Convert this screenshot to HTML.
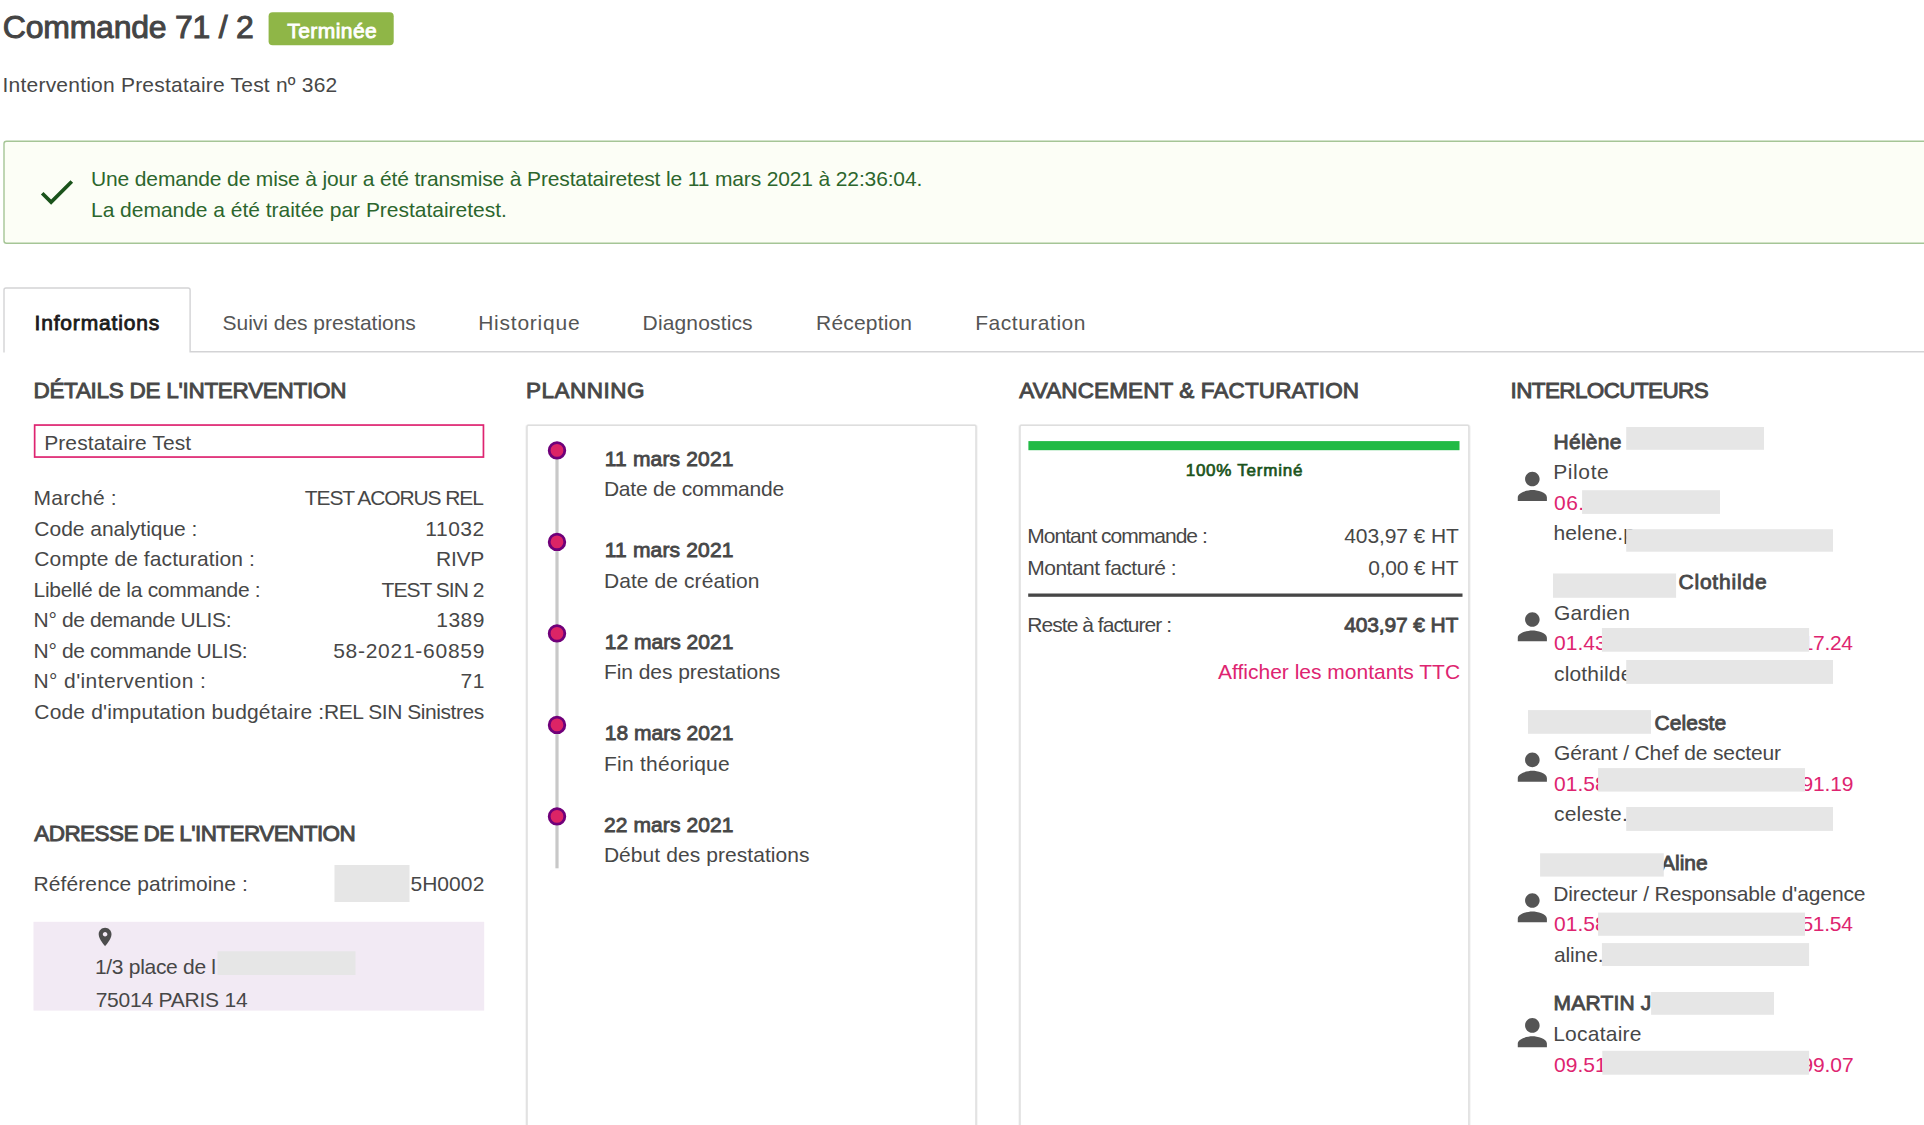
<!doctype html>
<html lang="fr"><head><meta charset="utf-8"><title>Commande 71 / 2</title>
<style>
*{margin:0;padding:0;box-sizing:border-box}
html,body{width:1924px;height:1125px;background:#fff;overflow:hidden}
body{position:relative;font-family:"Liberation Sans", sans-serif;font-size:21px;color:#474747;-webkit-font-smoothing:antialiased}
.t{position:absolute;white-space:pre;line-height:1;font-variant-ligatures:none}
.b{position:absolute}
</style></head>
<body>
<svg class="b" style="left:0;top:0" width="1924" height="1125" viewBox="0 0 1924 1125">
<rect x="268.60" y="12.30" width="125.10" height="33.00" fill="#8fb647" rx="4"/>
<rect x="4.00" y="141.20" width="1935.30" height="102.10" rx="2.5" fill="#fcfef6" stroke="#a5c596" stroke-width="1.4"/>
<path transform="translate(34.66 169.97) scale(1.83)" fill="#1a531b" d="M9 16.17L4.83 12l-1.42 1.41L9 19 21 7l-1.41-1.41z"/>
<path d="M4 352.4V290Q4 288 6 288H188.1Q190.1 288 190.1 290V351.7H1930" fill="none" stroke="#d3d3d5" stroke-width="1.4"/>
<rect x="34.65" y="425.05" width="448.80" height="32.00" rx="0" fill="#fff" stroke="#de2470" stroke-width="1.7"/>
<rect x="33.50" y="921.80" width="450.70" height="88.80" fill="#f2eaf4"/>
<path transform="translate(94.1 926) scale(0.9167)" fill="#4d4d4d" fill-rule="evenodd" d="M12 2C8.13 2 5 5.13 5 9c0 5.25 7 13 7 13s7-7.75 7-13c0-3.870-3.130-7-7-7zm0 9.500c-1.380 0-2.500-1.120-2.500-2.500s1.120-2.500 2.500-2.500 2.500 1.120 2.500 2.500-1.120 2.500-2.500 2.500z"/>
<rect x="526.20" y="425.30" width="450.60" height="714.70" rx="2.5" fill="none" stroke="#f6f6f6" stroke-width="2.4"/>
<rect x="526.98" y="425.17" width="449.05" height="714.05" rx="1.5" fill="#fff" stroke="#dedede" stroke-width="1.55"/>
<rect x="1019.20" y="425.30" width="450.50" height="714.70" rx="2.5" fill="none" stroke="#f6f6f6" stroke-width="2.4"/>
<rect x="1019.98" y="425.17" width="448.95" height="714.05" rx="1.5" fill="#fff" stroke="#dedede" stroke-width="1.55"/>
<rect x="555.40" y="450.40" width="3.20" height="417.90" fill="#c8c8c8"/>
<circle cx="557" cy="450.40" r="7.8" fill="#dc2466" stroke="#70007a" stroke-width="2.8"/>
<circle cx="557" cy="541.90" r="7.8" fill="#dc2466" stroke="#70007a" stroke-width="2.8"/>
<circle cx="557" cy="633.40" r="7.8" fill="#dc2466" stroke="#70007a" stroke-width="2.8"/>
<circle cx="557" cy="724.90" r="7.8" fill="#dc2466" stroke="#70007a" stroke-width="2.8"/>
<circle cx="557" cy="816.40" r="7.8" fill="#dc2466" stroke="#70007a" stroke-width="2.8"/>
<rect x="1028.40" y="441.10" width="431.10" height="9.10" fill="#21ba45"/>
<rect x="1028.20" y="593.50" width="434.30" height="3.30" fill="#464646"/>
<path transform="translate(1510.5 464.52) scale(1.82)" fill="#555" d="M12 12c2.21 0 4-1.790 4-4s-1.790-4-4-4-4 1.790-4 4 1.790 4 4 4zm0 2c-2.670 0-8 1.340-8 4v2h16v-2c0-2.660-5.330-4-8-4z"/>
<path transform="translate(1510.5 604.92) scale(1.82)" fill="#555" d="M12 12c2.21 0 4-1.790 4-4s-1.790-4-4-4-4 1.790-4 4 1.790 4 4 4zm0 2c-2.670 0-8 1.340-8 4v2h16v-2c0-2.660-5.330-4-8-4z"/>
<path transform="translate(1510.5 745.32) scale(1.82)" fill="#555" d="M12 12c2.21 0 4-1.790 4-4s-1.790-4-4-4-4 1.790-4 4 1.790 4 4 4zm0 2c-2.670 0-8 1.340-8 4v2h16v-2c0-2.660-5.330-4-8-4z"/>
<path transform="translate(1510.5 885.92) scale(1.82)" fill="#555" d="M12 12c2.21 0 4-1.790 4-4s-1.790-4-4-4-4 1.790-4 4 1.790 4 4 4zm0 2c-2.670 0-8 1.340-8 4v2h16v-2c0-2.660-5.330-4-8-4z"/>
<path transform="translate(1510.5 1010.82) scale(1.82)" fill="#555" d="M12 12c2.21 0 4-1.790 4-4s-1.790-4-4-4-4 1.790-4 4 1.790 4 4 4zm0 2c-2.670 0-8 1.340-8 4v2h16v-2c0-2.660-5.330-4-8-4z"/>
</svg>
<span class="t" style="left:2.86px;top:11.00px;font-size:32px;color:#444444;letter-spacing:-0.248px;-webkit-text-stroke:0.96px #444444;">Commande 71 / 2</span>
<span class="t" style="left:287.19px;top:20.00px;font-size:21px;color:#ffffff;letter-spacing:0.455px;-webkit-text-stroke:0.84px #ffffff;">Terminée</span>
<span class="t" style="left:2.55px;top:74.00px;font-size:21px;color:#474747;letter-spacing:0.217px;">Intervention Prestataire Test nº 362</span>
<span class="t" style="left:91.04px;top:168.00px;font-size:21px;color:#2c662d;letter-spacing:-0.142px;">Une demande de mise à jour a été transmise à Prestatairetest le 11 mars 2021 à 22:36:04.</span>
<span class="t" style="left:90.98px;top:199.00px;font-size:21px;color:#2c662d;letter-spacing:-0.021px;">La demande a été traitée par Prestatairetest.</span>
<span class="t" style="left:34.49px;top:312.00px;font-size:21px;color:#1b1b1b;letter-spacing:0.839px;-webkit-text-stroke:0.84px #1b1b1b;">Informations</span>
<span class="t" style="left:222.58px;top:312.00px;font-size:21px;color:#555555;letter-spacing:-0.026px;">Suivi des prestations</span>
<span class="t" style="left:478.18px;top:312.00px;font-size:21px;color:#555555;letter-spacing:0.765px;">Historique</span>
<span class="t" style="left:642.58px;top:312.00px;font-size:21px;color:#555555;letter-spacing:0.147px;">Diagnostics</span>
<span class="t" style="left:816.08px;top:312.00px;font-size:21px;color:#555555;letter-spacing:0.176px;">Réception</span>
<span class="t" style="left:975.18px;top:312.00px;font-size:21px;color:#555555;letter-spacing:0.528px;">Facturation</span>
<span class="t" style="left:33.42px;top:380.00px;font-size:22.5px;color:#474747;letter-spacing:-0.280px;-webkit-text-stroke:0.9px #474747;">DÉTAILS DE L'INTERVENTION</span>
<span class="t" style="left:525.92px;top:380.00px;font-size:22.5px;color:#474747;letter-spacing:0.494px;-webkit-text-stroke:0.9px #474747;">PLANNING</span>
<span class="t" style="left:1019.30px;top:380.00px;font-size:22.5px;color:#474747;letter-spacing:0.116px;-webkit-text-stroke:0.9px #474747;">AVANCEMENT &amp; FACTURATION</span>
<span class="t" style="left:1510.58px;top:380.00px;font-size:22.5px;color:#474747;letter-spacing:-0.623px;-webkit-text-stroke:0.9px #474747;">INTERLOCUTEURS</span>
<span class="t" style="left:34.30px;top:823.00px;font-size:22.5px;color:#474747;letter-spacing:-0.572px;-webkit-text-stroke:0.9px #474747;">ADRESSE DE L'INTERVENTION</span>
<span class="t" style="left:44.18px;top:432.00px;font-size:21px;color:#474747;letter-spacing:0.098px;">Prestataire Test</span>
<span class="t" style="left:33.58px;top:487.00px;font-size:21px;color:#474747;letter-spacing:0.199px;">Marché :</span>
<span class="t" style="left:304.80px;top:487.00px;font-size:21px;color:#474747;letter-spacing:-1.101px;">TEST ACORUS REL</span>
<span class="t" style="left:34.37px;top:518.00px;font-size:21px;color:#474747;letter-spacing:-0.026px;">Code analytique :</span>
<span class="t" style="left:425.34px;top:518.00px;font-size:21px;color:#474747;letter-spacing:0.500px;">11032</span>
<span class="t" style="left:34.37px;top:548.00px;font-size:21px;color:#474747;letter-spacing:0.094px;">Compte de facturation :</span>
<span class="t" style="left:436.08px;top:548.00px;font-size:21px;color:#474747;letter-spacing:-0.249px;">RIVP</span>
<span class="t" style="left:33.58px;top:579.00px;font-size:21px;color:#474747;letter-spacing:-0.276px;">Libellé de la commande :</span>
<span class="t" style="left:381.55px;top:579.00px;font-size:21px;color:#474747;letter-spacing:-0.977px;">TEST SIN 2</span>
<span class="t" style="left:33.58px;top:609.00px;font-size:21px;color:#474747;letter-spacing:-0.367px;">N° de demande ULIS:</span>
<span class="t" style="left:436.22px;top:609.00px;font-size:21px;color:#474747;letter-spacing:0.500px;">1389</span>
<span class="t" style="left:33.58px;top:640.00px;font-size:21px;color:#474747;letter-spacing:-0.357px;">N° de commande ULIS:</span>
<span class="t" style="left:333.14px;top:640.00px;font-size:21px;color:#474747;letter-spacing:0.734px;">58-2021-60859</span>
<span class="t" style="left:33.58px;top:670.00px;font-size:21px;color:#474747;letter-spacing:0.381px;">N° d'intervention :</span>
<span class="t" style="left:460.47px;top:670.00px;font-size:21px;color:#474747;letter-spacing:0.500px;">71</span>
<span class="t" style="left:34.37px;top:701.00px;font-size:21px;color:#474747;letter-spacing:0.149px;">Code d'imputation budgétaire :</span>
<span class="t" style="left:324.08px;top:701.00px;font-size:21px;color:#474747;letter-spacing:-0.447px;">REL SIN Sinistres</span>
<span class="t" style="left:33.58px;top:873.00px;font-size:21px;color:#474747;letter-spacing:0.089px;">Référence patrimoine :</span>
<span class="t" style="left:410.39px;top:873.00px;font-size:21px;color:#474747;letter-spacing:0.074px;">5H0002</span>
<span class="t" style="left:94.92px;top:956.00px;font-size:21px;color:#474747;letter-spacing:-0.295px;">1/3 place de l</span>
<span class="t" style="left:95.64px;top:989.00px;font-size:21px;color:#474747;letter-spacing:-0.219px;">75014 PARIS 14</span>
<span class="t" style="left:604.77px;top:448.00px;font-size:21px;color:#474747;letter-spacing:0.170px;-webkit-text-stroke:0.84px #474747;">11 mars 2021</span>
<span class="t" style="left:603.88px;top:478.00px;font-size:21px;color:#474747;letter-spacing:-0.200px;">Date de commande</span>
<span class="t" style="left:604.77px;top:539.00px;font-size:21px;color:#474747;letter-spacing:0.170px;-webkit-text-stroke:0.84px #474747;">11 mars 2021</span>
<span class="t" style="left:603.88px;top:570.00px;font-size:21px;color:#474747;letter-spacing:0.096px;">Date de création</span>
<span class="t" style="left:604.77px;top:631.00px;font-size:21px;color:#474747;letter-spacing:0.020px;-webkit-text-stroke:0.84px #474747;">12 mars 2021</span>
<span class="t" style="left:603.88px;top:661.00px;font-size:21px;color:#474747;letter-spacing:-0.052px;">Fin des prestations</span>
<span class="t" style="left:604.77px;top:722.00px;font-size:21px;color:#474747;letter-spacing:0.020px;-webkit-text-stroke:0.84px #474747;">18 mars 2021</span>
<span class="t" style="left:603.88px;top:753.00px;font-size:21px;color:#474747;letter-spacing:0.272px;">Fin théorique</span>
<span class="t" style="left:604.08px;top:814.00px;font-size:21px;color:#474747;letter-spacing:0.083px;-webkit-text-stroke:0.84px #474747;">22 mars 2021</span>
<span class="t" style="left:603.88px;top:844.00px;font-size:21px;color:#474747;letter-spacing:0.070px;">Début des prestations</span>
<span class="t" style="left:1185.70px;top:462.00px;font-size:17px;color:#1a531b;letter-spacing:0.754px;-webkit-text-stroke:0.68px #1a531b;">100% Terminé</span>
<span class="t" style="left:1027.33px;top:525.00px;font-size:21px;color:#474747;letter-spacing:-0.993px;">Montant commande :</span>
<span class="t" style="left:1344.29px;top:525.00px;font-size:21px;color:#474747;letter-spacing:-0.109px;">403,97 € HT</span>
<span class="t" style="left:1027.33px;top:557.00px;font-size:21px;color:#474747;letter-spacing:-0.522px;">Montant facturé :</span>
<span class="t" style="left:1368.25px;top:557.00px;font-size:21px;color:#474747;letter-spacing:-0.238px;">0,00 € HT</span>
<span class="t" style="left:1027.33px;top:614.00px;font-size:21px;color:#474747;letter-spacing:-0.966px;">Reste à facturer :</span>
<span class="t" style="left:1344.14px;top:614.00px;font-size:21px;color:#474747;letter-spacing:-0.135px;-webkit-text-stroke:0.84px #474747;">403,97 € HT</span>
<span class="t" style="left:1217.98px;top:661.00px;font-size:21px;color:#de2470;letter-spacing:0.005px;">Afficher les montants TTC</span>
<span class="t" style="left:1553.60px;top:431.00px;font-size:21px;color:#474747;letter-spacing:0.237px;-webkit-text-stroke:0.84px #474747;">Hélène</span>
<span class="t" style="left:1553.18px;top:461.00px;font-size:21px;color:#474747;letter-spacing:0.617px;">Pilote</span>
<span class="t" style="left:1554.10px;top:492.00px;font-size:21px;color:#de2470;letter-spacing:0.400px;">06.</span>
<span class="t" style="left:1553.40px;top:522.00px;font-size:21px;color:#474747;letter-spacing:0.150px;">helene.p</span>
<span class="t" style="left:1678.45px;top:571.00px;font-size:21px;color:#474747;letter-spacing:0.808px;-webkit-text-stroke:0.84px #474747;">Clothilde</span>
<span class="t" style="left:1553.97px;top:602.00px;font-size:21px;color:#474747;letter-spacing:0.203px;">Gardien</span>
<span class="t" style="left:1554.10px;top:632.00px;font-size:21px;color:#de2470;letter-spacing:0.017px;">01.43</span>
<span class="t" style="left:1801.67px;top:632.00px;font-size:21px;color:#de2470;letter-spacing:-0.312px;">17.24</span>
<span class="t" style="left:1554.07px;top:663.00px;font-size:21px;color:#474747;letter-spacing:0.150px;">clothilde</span>
<span class="t" style="left:1654.55px;top:712.00px;font-size:21px;color:#474747;letter-spacing:0.070px;-webkit-text-stroke:0.84px #474747;">Celeste</span>
<span class="t" style="left:1553.97px;top:742.00px;font-size:21px;color:#474747;letter-spacing:-0.124px;">Gérant / Chef de secteur</span>
<span class="t" style="left:1554.10px;top:773.00px;font-size:21px;color:#de2470;letter-spacing:0.015px;">01.58</span>
<span class="t" style="left:1801.39px;top:773.00px;font-size:21px;color:#de2470;letter-spacing:-0.099px;">91.19</span>
<span class="t" style="left:1554.07px;top:803.00px;font-size:21px;color:#474747;letter-spacing:0.190px;">celeste.</span>
<span class="t" style="left:1661.03px;top:852.00px;font-size:21px;color:#474747;letter-spacing:-0.030px;-webkit-text-stroke:0.84px #474747;">Aline</span>
<span class="t" style="left:1553.18px;top:883.00px;font-size:21px;color:#474747;letter-spacing:-0.107px;">Directeur / Responsable d'agence</span>
<span class="t" style="left:1554.10px;top:913.00px;font-size:21px;color:#de2470;letter-spacing:0.015px;">01.58</span>
<span class="t" style="left:1801.39px;top:913.00px;font-size:21px;color:#de2470;letter-spacing:-0.240px;">51.54</span>
<span class="t" style="left:1554.05px;top:944.00px;font-size:21px;color:#474747;letter-spacing:-0.149px;">aline.</span>
<span class="t" style="left:1553.60px;top:992.00px;font-size:21px;color:#474747;letter-spacing:0.186px;-webkit-text-stroke:0.84px #474747;">MARTIN J</span>
<span class="t" style="left:1553.18px;top:1023.00px;font-size:21px;color:#474747;letter-spacing:0.248px;">Locataire</span>
<span class="t" style="left:1554.10px;top:1054.00px;font-size:21px;color:#de2470;letter-spacing:0.029px;">09.51</span>
<span class="t" style="left:1801.39px;top:1054.00px;font-size:21px;color:#de2470;letter-spacing:-0.086px;">99.07</span>
<svg class="b" style="left:0;top:0" width="1924" height="1125" viewBox="0 0 1924 1125">
<rect x="334.50" y="865.00" width="75.00" height="37.00" fill="#e6e6e6"/>
<rect x="217.50" y="951.25" width="138.00" height="23.75" fill="#e6e6e6"/>
<rect x="1626.20" y="427.00" width="137.80" height="22.80" fill="#e6e6e6"/>
<rect x="1582.10" y="490.20" width="137.90" height="23.70" fill="#e6e6e6"/>
<rect x="1626.20" y="529.20" width="206.80" height="22.50" fill="#e6e6e6"/>
<rect x="1553.00" y="573.50" width="123.10" height="24.30" fill="#e6e6e6"/>
<rect x="1601.90" y="628.00" width="207.20" height="23.70" fill="#e6e6e6"/>
<rect x="1626.20" y="660.00" width="206.80" height="23.90" fill="#e6e6e6"/>
<rect x="1528.00" y="710.10" width="123.00" height="23.70" fill="#e6e6e6"/>
<rect x="1598.10" y="768.10" width="206.90" height="23.50" fill="#e6e6e6"/>
<rect x="1626.20" y="807.00" width="206.80" height="23.90" fill="#e6e6e6"/>
<rect x="1540.10" y="853.30" width="123.70" height="23.30" fill="#e6e6e6"/>
<rect x="1598.10" y="912.60" width="206.90" height="23.20" fill="#e6e6e6"/>
<rect x="1601.90" y="943.10" width="207.20" height="22.90" fill="#e6e6e6"/>
<rect x="1651.10" y="992.00" width="122.90" height="22.80" fill="#e6e6e6"/>
<rect x="1602.30" y="1050.80" width="206.80" height="23.90" fill="#e6e6e6"/>
</svg>
</body></html>
